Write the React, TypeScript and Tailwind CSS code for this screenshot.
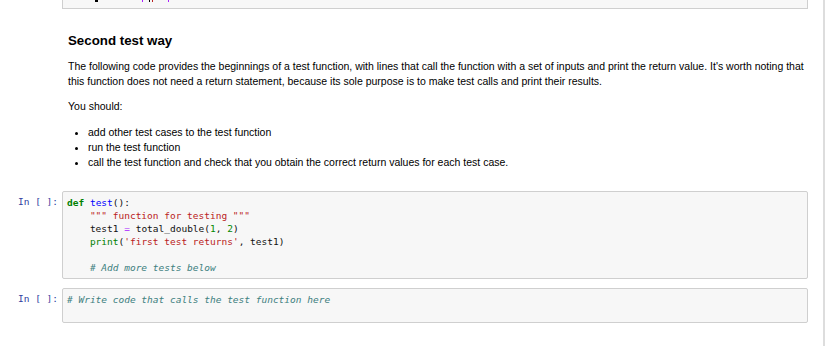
import React from "react";

const mono = { fontFamily: '"DejaVu Sans Mono", "Liberation Mono", monospace' };

function Prompt() {
  return (
    <div
      className="w-[62px] shrink-0 pl-[18px] pt-[4px] text-[9.5px] leading-[13px] text-[#303F9F]"
      style={mono}
    >
      In&nbsp;[&nbsp;]:
    </div>
  );
}

function CodeCell({ children, className = "" }: { children: React.ReactNode; className?: string }) {
  return (
    <div className="flex">
      <Prompt />
      <div
        className={
          "mr-[15px] flex-1 rounded-[2px] border border-[#cfcfcf] bg-[#f7f7f7] px-[4px] py-[4px] text-[9.5px] leading-[13px] text-[#111] " +
          className
        }
        style={mono}
      >
        {children}
      </div>
    </div>
  );
}

export default function App() {
  return (
    <div className="flex h-[346px] w-[826px] overflow-hidden bg-white">
      <div className="flex flex-1 flex-col">
        {/* tail of the previous code cell, only glyph bottoms peek out */}
        <div className="flex">
          <div className="w-[62px] shrink-0" />
          <div className="mr-[15px] flex h-[9px] flex-1 items-start gap-[1px] border-x border-b border-[#cfcfcf] bg-[#f7f7f7] pl-[32px]">
            <div className="h-[2px] w-[3px] bg-black" />
            <div className="ml-[43px] h-[2px] w-[1px] bg-[#AA22FF]" />
            <div className="ml-[5px] h-[2px] w-[1px] bg-black" />
            <div className="ml-[1px] h-[2px] w-[1px] bg-[#BA2121]" />
            <div className="ml-[14px] h-[2px] w-[1px] bg-[#AA22FF]" />
          </div>
        </div>

        {/* markdown cell */}
        <div
          className="pl-[68px] pr-[16px] pt-[24px] text-[10.5px] leading-[15px] text-black"
          style={{ fontFamily: '"Liberation Sans", Arial, sans-serif' }}
        >
          <h2 className="text-[13.3px] font-bold leading-[16px]">Second test way</h2>
          <p className="mt-[10px]">
            The following code provides the beginnings of a test function, with lines that call the function with a
            set of inputs and print the return value. It's worth noting that this function does not need a return
            statement, because its sole purpose is to make test calls and print their results.
          </p>
          <p className="mt-[10px]">You should:</p>
          <ul className="mt-[11px] list-disc pl-[20px]">
            <li>add other test cases to the test function</li>
            <li>run the test function</li>
            <li>call the test function and check that you obtain the correct return values for each test case.</li>
          </ul>
        </div>

        <div className="mt-[21px]">
          <CodeCell>
            <div className="whitespace-pre">
              <span className="font-bold text-[#008000]">def</span> <span className="text-[#0000ff]">test</span>():
            </div>
            <div className="whitespace-pre text-[#BA2121]">    """ function for testing """</div>
            <div className="whitespace-pre">
              {"    test1 "}
              <span className="text-[#AA22FF]">=</span> total_double(<span className="text-[#008800]">1</span>,{" "}
              <span className="text-[#008800]">2</span>)
            </div>
            <div className="whitespace-pre">
              {"    "}
              <span className="text-[#008000]">print</span>(
              <span className="text-[#BA2121]">'first test returns'</span>, test1)
            </div>
            <div className="whitespace-pre">&nbsp;</div>
            <div className="whitespace-pre italic text-[#408080]">    # Add more tests below</div>
          </CodeCell>
        </div>

        <div className="mt-[9px]">
          <CodeCell className="h-[35px]">
            <div className="whitespace-pre italic text-[#408080]"># Write code that calls the test function here</div>
          </CodeCell>
        </div>
      </div>
      <div className="w-[3px] border-l-2 border-[#dddddd] bg-white" />
    </div>
  );
}
